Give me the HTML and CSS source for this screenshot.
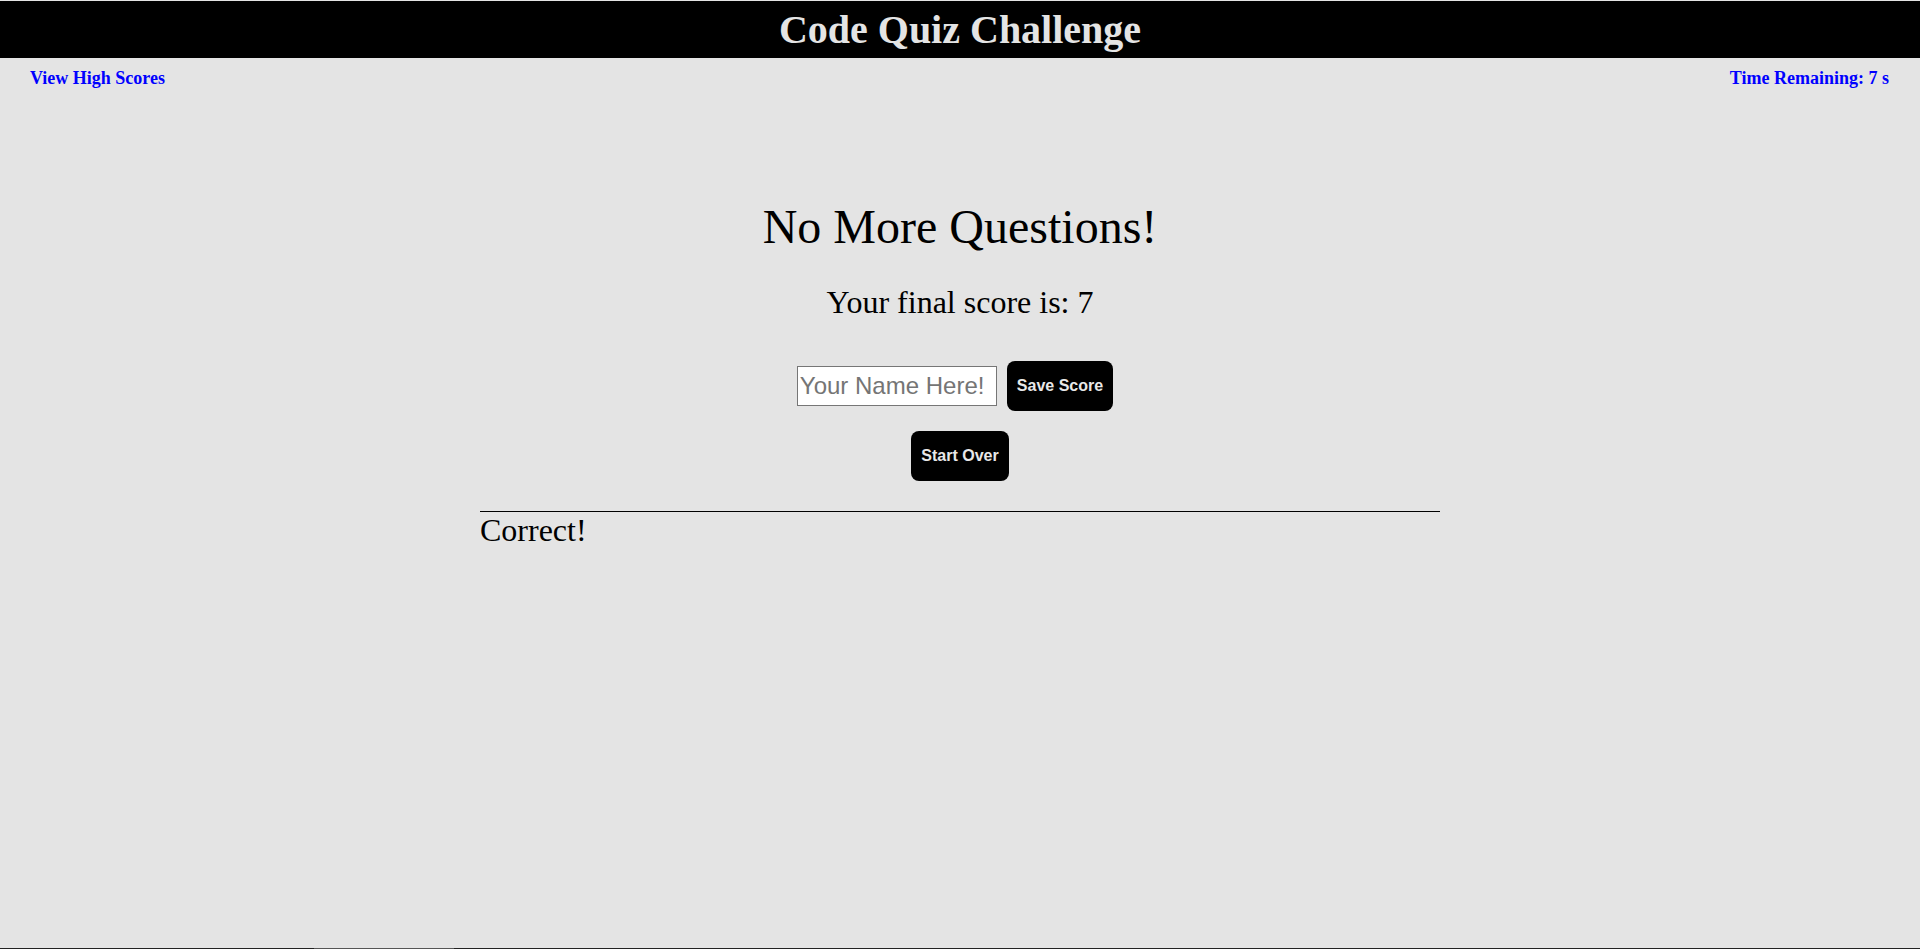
FILE: index.html
```html
<!DOCTYPE html>
<html lang="en">
<head>
<meta charset="utf-8">
<title>Code Quiz Challenge</title>
<link rel="stylesheet" href="styles.css">
</head>
<body>
<header class="site-header">
  <h1 class="site-title">Code Quiz Challenge</h1>
</header>
<nav class="top-nav">
  <a class="nav-link" href="#">View High Scores</a>
  <span class="timer">Time Remaining: 7 s</span>
</nav>
<main class="quiz">
  <h2 class="quiz-title">No More Questions!</h2>
  <p class="quiz-score">Your final score is: 7</p>
  <div class="save-row">
    <input class="name-input" type="text" placeholder="Your Name Here!">
    <button class="btn">Save Score</button>
  </div>
  <div class="restart-row">
    <button class="btn">Start Over</button>
  </div>
  <div class="feedback">Correct!</div>
</main>
<div class="window-edge"><span class="window-edge-tab"></span></div>
</body>
</html>
```
FILE: styles.css
```css
html {
  background: #e4e4e4;
}
body {
  margin: 0;
  padding-top: 1px;
  background: #e4e4e4;
  font-family: "Liberation Serif", "Times New Roman", serif;
  color: #000;
}
.site-header {
  height: 57px;
  background: #000;
  display: flex;
  align-items: center;
  justify-content: center;
}
.site-title {
  margin: 0;
  font-size: 40px;
  font-weight: bold;
  color: #e4e4e4;
  line-height: 46px;
}
.top-nav {
  display: flex;
  justify-content: space-between;
  padding: 0 31px 0 30px;
  margin-top: 10px;
  font-size: 18px;
  font-weight: bold;
  line-height: 20px;
}
.nav-link,
.timer {
  color: #0000ff;
  text-decoration: none;
}
.quiz {
  display: flex;
  flex-direction: column;
  align-items: center;
  padding-top: 111px;
}
.quiz-title {
  margin: 0;
  font-size: 48px;
  font-weight: normal;
  line-height: 55px;
}
.quiz-score {
  margin: 30px 0 0;
  font-size: 32px;
  line-height: 37px;
}
.save-row {
  margin-top: 30px;
  display: flex;
  align-items: center;
  justify-content: center;
}
.restart-row {
  display: flex;
  justify-content: center;
}
.name-input {
  box-sizing: border-box;
  width: 200px;
  height: 40px;
  margin: 0;
  padding: 1px 2px;
  border: 1px solid #767676;
  background: #fff;
  font-family: "Liberation Sans", Arial, sans-serif;
  font-size: 24px;
  color: #000;
}
.name-input::placeholder {
  color: #757575;
  opacity: 1;
}
.btn {
  height: 50px;
  margin: 10px;
  padding: 0 10px;
  border: 0;
  border-radius: 8px;
  background: #000;
  color: #e8e8e8;
  font-family: "Liberation Sans", Arial, sans-serif;
  font-size: 16px;
  font-weight: bold;
  cursor: pointer;
}
.feedback {
  box-sizing: border-box;
  width: 960px;
  margin-top: 20px;
  border-top: 1px solid #000;
  font-size: 32px;
  line-height: 37px;
  text-align: left;
}
.window-edge {
  position: fixed;
  left: 0;
  right: 0;
  bottom: 0;
  height: 1px;
  background: #222;
}
.window-edge-tab {
  position: absolute;
  left: 314px;
  width: 140px;
  top: 0;
  height: 1px;
  background: #555;
}
```
